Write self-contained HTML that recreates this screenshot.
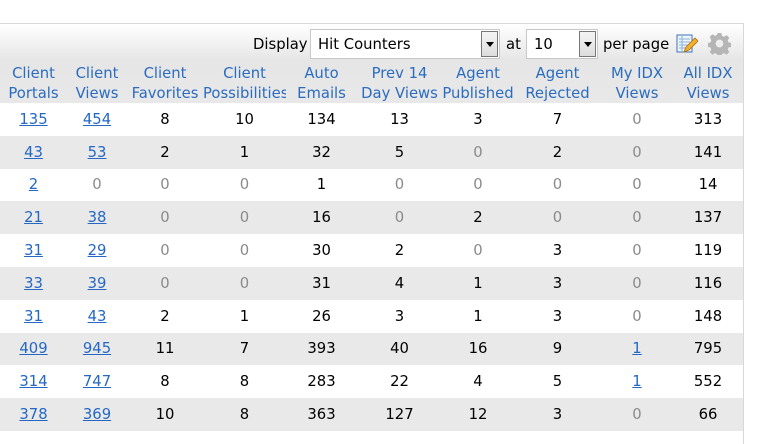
<!DOCTYPE html>
<html><head><style>
body{margin:0;width:770px;height:437px;background:#fff;overflow:hidden;font-family:"DejaVu Sans",Verdana,sans-serif;font-size:14.8px;}
.wrap{position:absolute;left:-1px;top:23px;width:744px;border-top:1px solid #d8d8d8;border-right:1px solid #d8d8d8;height:420px;}
.head{position:absolute;left:0;top:0;width:744px;height:79px;background:linear-gradient(#fff,#e6e6e6 45%,#e8e8e8);}
.tb{position:absolute;top:6px;height:30px;line-height:30px;color:#000;}
.sel{position:absolute;top:5px;height:30px;border:1px solid #c8c8c8;background:#fff;box-sizing:border-box;line-height:29px;padding-left:7px;}
.arr{position:absolute;right:1px;top:1px;width:17px;height:26px;border:1px solid #777;background:linear-gradient(#f4f4f4,#ddd);box-sizing:border-box;}
.arr:after{content:"";position:absolute;left:4px;top:10px;border-left:4px solid transparent;border-right:4px solid transparent;border-top:5px solid #000;}
table{position:absolute;left:1px;top:38px;border-collapse:collapse;table-layout:fixed;width:743px;}
th{font-weight:normal;color:#2b6cc0;height:41px;box-sizing:border-box;padding:2px 0 0;line-height:19.5px;vertical-align:top;white-space:nowrap;overflow:hidden;}
td{text-align:center;height:32.8px;padding:0;color:#000;}
tr.g td{background:#e9e9e9;}
a{color:#2468c4;text-decoration:underline;}
.z{color:#8a8a8a;}
</style></head><body>
<div class="wrap">
<div class="head"></div>
<div class="tb" style="left:254px">Display</div>
<div class="sel" style="left:311px;width:190px">Hit Counters<div class="arr"></div></div>
<div class="tb" style="left:507px">at</div>
<div class="sel" style="left:527px;width:72px">10<div class="arr"></div></div>
<div class="tb" style="left:604px">per page</div>
<svg style="position:absolute;left:677px;top:9px" width="22" height="22" viewBox="0 0 22 22"><rect x="1" y="2" width="15" height="17" fill="#eef4fb" stroke="#3b73b9"/><g stroke="#8fb0da"><line x1="3" y1="6" x2="14" y2="6"/><line x1="3" y1="9" x2="14" y2="9"/><line x1="3" y1="12" x2="14" y2="12"/><line x1="3" y1="15" x2="14" y2="15"/><line x1="6" y1="3" x2="6" y2="18"/></g><path d="M8 19l2-5 9-9 3 3-9 9z" fill="#f0b030" stroke="#b07010" stroke-width=".8"/></svg>
<svg style="position:absolute;left:709px;top:8px" width="23" height="23" viewBox="0 0 24 24"><path fill="#b5b5b5" d="M10 1h4l.6 3 2.2 1 2.6-1.7 2.8 2.8-1.7 2.6 1 2.2 3 .6v4l-3 .6-1 2.2 1.7 2.6-2.8 2.8-2.6-1.7-2.2 1-.6 3h-4l-.6-3-2.2-1-2.6 1.7-2.8-2.8 1.7-2.6-1-2.2-3-.6v-4l3-.6 1-2.2L1.8 5.1 4.6 2.3l2.6 1.7 2.2-1z"/><circle cx="12" cy="12" r="4" fill="#eee"/></svg>
<table>
<colgroup><col style="width:67px"><col style="width:60px"><col style="width:76px"><col style="width:83px"><col style="width:71px"><col style="width:85px"><col style="width:72px"><col style="width:87px"><col style="width:72px"><col style="width:70px"></colgroup>
<tr><th>Client<br>Portals</th><th>Client<br>Views</th><th>Client<br>Favorites</th><th>Client<br>Possibilities</th><th>Auto<br>Emails</th><th>Prev 14<br>Day Views</th><th>Agent<br>Published</th><th>Agent<br>Rejected</th><th>My IDX<br>Views</th><th>All IDX<br>Views</th></tr>
<tr><td><a>135</a></td><td><a>454</a></td><td>8</td><td>10</td><td>134</td><td>13</td><td>3</td><td>7</td><td class="z">0</td><td>313</td></tr>
<tr class="g"><td><a>43</a></td><td><a>53</a></td><td>2</td><td>1</td><td>32</td><td>5</td><td class="z">0</td><td>2</td><td class="z">0</td><td>141</td></tr>
<tr><td><a>2</a></td><td class="z">0</td><td class="z">0</td><td class="z">0</td><td>1</td><td class="z">0</td><td class="z">0</td><td class="z">0</td><td class="z">0</td><td>14</td></tr>
<tr class="g"><td><a>21</a></td><td><a>38</a></td><td class="z">0</td><td class="z">0</td><td>16</td><td class="z">0</td><td>2</td><td class="z">0</td><td class="z">0</td><td>137</td></tr>
<tr><td><a>31</a></td><td><a>29</a></td><td class="z">0</td><td class="z">0</td><td>30</td><td>2</td><td class="z">0</td><td>3</td><td class="z">0</td><td>119</td></tr>
<tr class="g"><td><a>33</a></td><td><a>39</a></td><td class="z">0</td><td class="z">0</td><td>31</td><td>4</td><td>1</td><td>3</td><td class="z">0</td><td>116</td></tr>
<tr><td><a>31</a></td><td><a>43</a></td><td>2</td><td>1</td><td>26</td><td>3</td><td>1</td><td>3</td><td class="z">0</td><td>148</td></tr>
<tr class="g"><td><a>409</a></td><td><a>945</a></td><td>11</td><td>7</td><td>393</td><td>40</td><td>16</td><td>9</td><td><a>1</a></td><td>795</td></tr>
<tr><td><a>314</a></td><td><a>747</a></td><td>8</td><td>8</td><td>283</td><td>22</td><td>4</td><td>5</td><td><a>1</a></td><td>552</td></tr>
<tr class="g"><td><a>378</a></td><td><a>369</a></td><td>10</td><td>8</td><td>363</td><td>127</td><td>12</td><td>3</td><td class="z">0</td><td>66</td></tr>
</table>
</div>
</body></html>
